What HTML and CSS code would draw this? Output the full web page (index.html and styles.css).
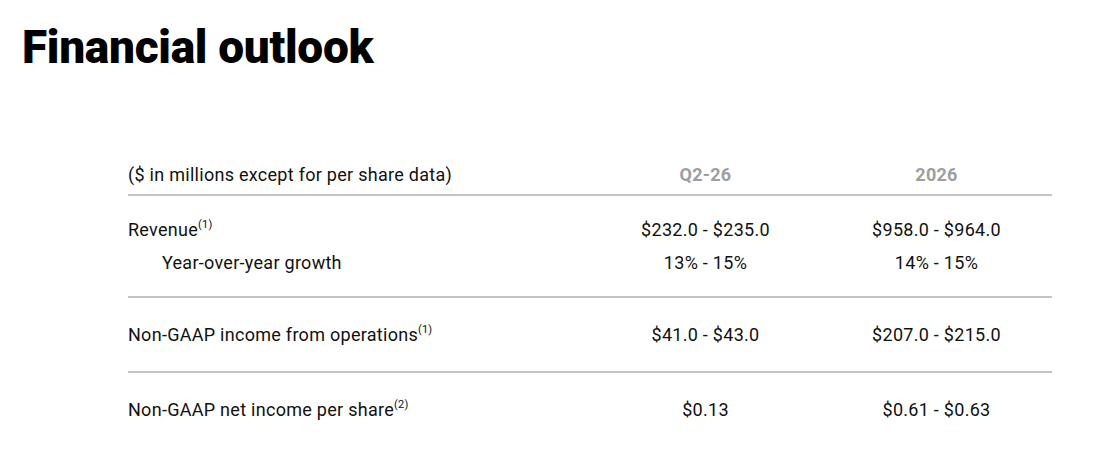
FILE: index.html
```html
<!DOCTYPE html>
<html>
<head>
<meta charset="utf-8">
<link rel="stylesheet" href="styles.css">
</head>
<body>
<h1 class="title">Financial outlook</h1>
<div class="table">
  <div class="row head">
    <div class="label">($ in millions except for per share data)</div>
    <div class="num">Q2-26</div>
    <div class="num">2026</div>
  </div>
  <div class="group g1">
    <div class="row">
      <div class="label">Revenue<sup>(1)</sup></div>
      <div class="num">$232.0 - $235.0</div>
      <div class="num">$958.0 - $964.0</div>
    </div>
    <div class="row sub">
      <div class="label indent">Year-over-year growth</div>
      <div class="num">13% - 15%</div>
      <div class="num">14% - 15%</div>
    </div>
  </div>
  <div class="group g2">
    <div class="row">
      <div class="label">Non-GAAP income from operations<sup>(1)</sup></div>
      <div class="num">$41.0 - $43.0</div>
      <div class="num">$207.0 - $215.0</div>
    </div>
  </div>
  <div class="group g3">
    <div class="row">
      <div class="label">Non-GAAP net income per share<sup>(2)</sup></div>
      <div class="num">$0.13</div>
      <div class="num">$0.61 - $0.63</div>
    </div>
  </div>
</div>
</body>
</html>
```
FILE: styles.css
```css
html, body {
  margin: 0;
  padding: 0;
  background: #fff;
}
body {
  font-family: Roboto, "Liberation Sans", sans-serif;
  color: #111;
  width: 1108px;
  height: 466px;
  overflow: hidden;
}
.title {
  margin: 24px 0 0 22px;
  font-size: 46px;
  line-height: 46px;
  font-weight: 900;
  color: #000;
  letter-spacing: -0.3px;
}
.table {
  margin: 95px 0 0 128px;
  width: 924px;
}
.row {
  display: grid;
  grid-template-columns: 462px 231px 231px;
  font-size: 18px;
  line-height: 20px;
  letter-spacing: 0.28px;
}
.num {
  text-align: center;
}
.head {
  padding-bottom: 9px;
  border-bottom: 2px solid #c4c4c4;
}
.head .num {
  font-weight: 700;
  color: #9e9e9e;
}
.group {
  border-bottom: 2px solid #c4c4c4;
}
.g1 {
  padding: 24px 0 23px;
}
.sub {
  margin-top: 13px;
}
.indent {
  padding-left: 34px;
}
.g2 {
  padding: 27px 0 26px;
}
.g3 {
  padding-top: 27px;
  border-bottom: none;
}
sup {
  font-size: 11px;
  line-height: 0;
  vertical-align: 8px;
  letter-spacing: 0.2px;
}
```
